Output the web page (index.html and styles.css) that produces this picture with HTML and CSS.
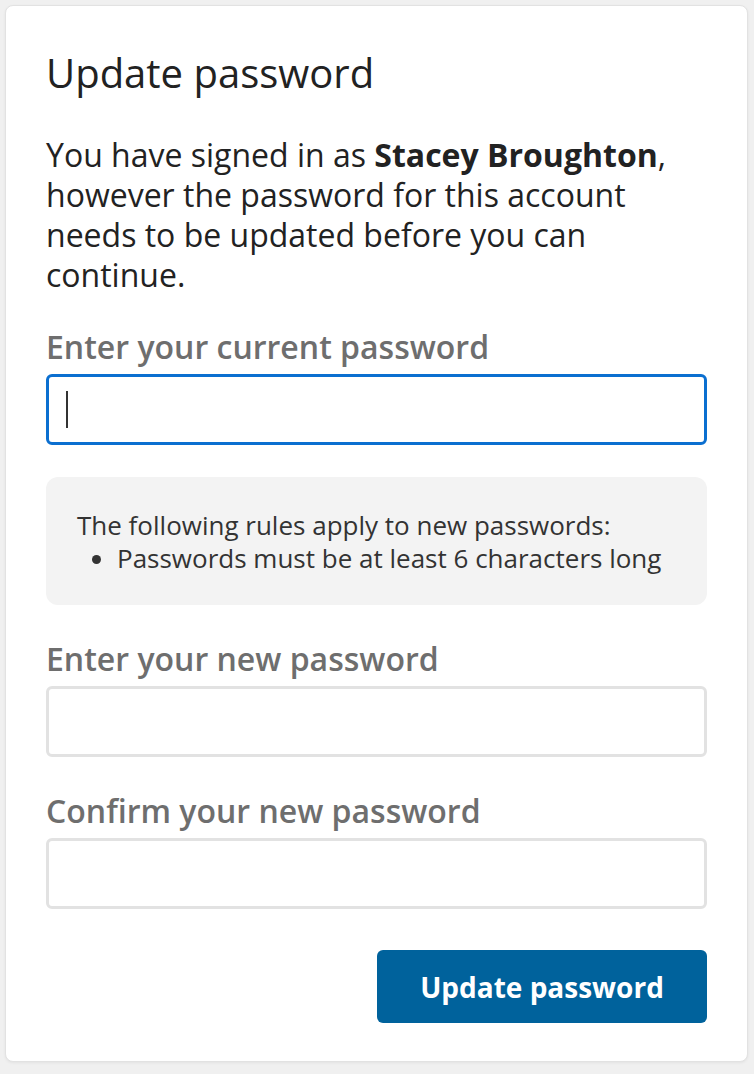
FILE: index.html
```html
<!DOCTYPE html>
<html lang="en">
<head>
<meta charset="utf-8">
<title>Update password</title>
<link rel="stylesheet" href="styles.css">
</head>
<body>
<main class="card">
  <h1 class="title">Update password</h1>
  <p class="intro">You have signed in as <strong>Stacey Broughton</strong>, however the password for this account needs to be updated before you can continue.</p>
  <form class="form">
    <div class="field">
      <label class="label" for="current">Enter your current password</label>
      <div class="input focused"><span class="caret"></span></div>
    </div>
    <div class="rules">
      <p class="rules-title">The following rules apply to new passwords:</p>
      <ul class="rules-list">
        <li>Passwords must be at least 6 characters long</li>
      </ul>
    </div>
    <div class="field">
      <label class="label" for="new">Enter your new password</label>
      <div class="input"></div>
    </div>
    <div class="field">
      <label class="label" for="confirm">Confirm your new password</label>
      <div class="input"></div>
    </div>
    <div class="actions">
      <button type="button" class="btn">Update password</button>
    </div>
  </form>
</main>
</body>
</html>
```

FILE: styles.css
```css
* { box-sizing: border-box; }
html, body { margin: 0; padding: 0; }
body {
  background: #f0f0f0;
  font-family: "Open Sans", "Liberation Sans", sans-serif;
  color: #222;
  padding: 5px 6px 10px 5px;
}
.card {
  background: #fff;
  border: 1px solid #e2e2e2;
  border-radius: 8px;
  box-shadow: 0 1px 3px rgba(0,0,0,0.06);
  padding: 40px 40px 38px 40px;
}
.title {
  margin: 0;
  font-size: 40px;
  font-weight: 400;
  line-height: 54px;
  color: #222;
}
.intro {
  margin: 35px 0 0;
  font-size: 32px;
  line-height: 40px;
  color: #222;
}
.intro strong { font-weight: 700; }
.form { margin-top: 32px; }
.field { display: flex; flex-direction: column; }
.label {
  font-size: 32px;
  font-weight: 600;
  color: #6e6e6e;
  line-height: 40px;
  margin-bottom: 7px;
}
.input {
  height: 71px;
  border: 3px solid #e2e2e2;
  border-radius: 6px;
  background: #fff;
  display: flex;
  align-items: center;
  padding-left: 17px;
}
.input.focused { border-color: #0b6fd0; }
.caret {
  width: 2px;
  height: 37px;
  background: #333;
}
.rules {
  margin: 32px 0 34px;
  background: #f3f3f3;
  border-radius: 12px;
  padding: 32px 31px 30px;
  font-size: 26px;
  line-height: 33px;
  color: #333;
}
.rules-title { margin: 0; }
.rules-list { margin: 0; padding-left: 40px; }
.field + .field { margin-top: 34px; }
.actions {
  display: flex;
  justify-content: flex-end;
  margin-top: 41px;
}
.btn {
  width: 330px;
  height: 73px;
  background: #00629c;
  color: #fff;
  border: none;
  border-radius: 6px;
  font-family: "Open Sans", "Liberation Sans", sans-serif;
  font-size: 28px;
  font-weight: 700;
}
```
